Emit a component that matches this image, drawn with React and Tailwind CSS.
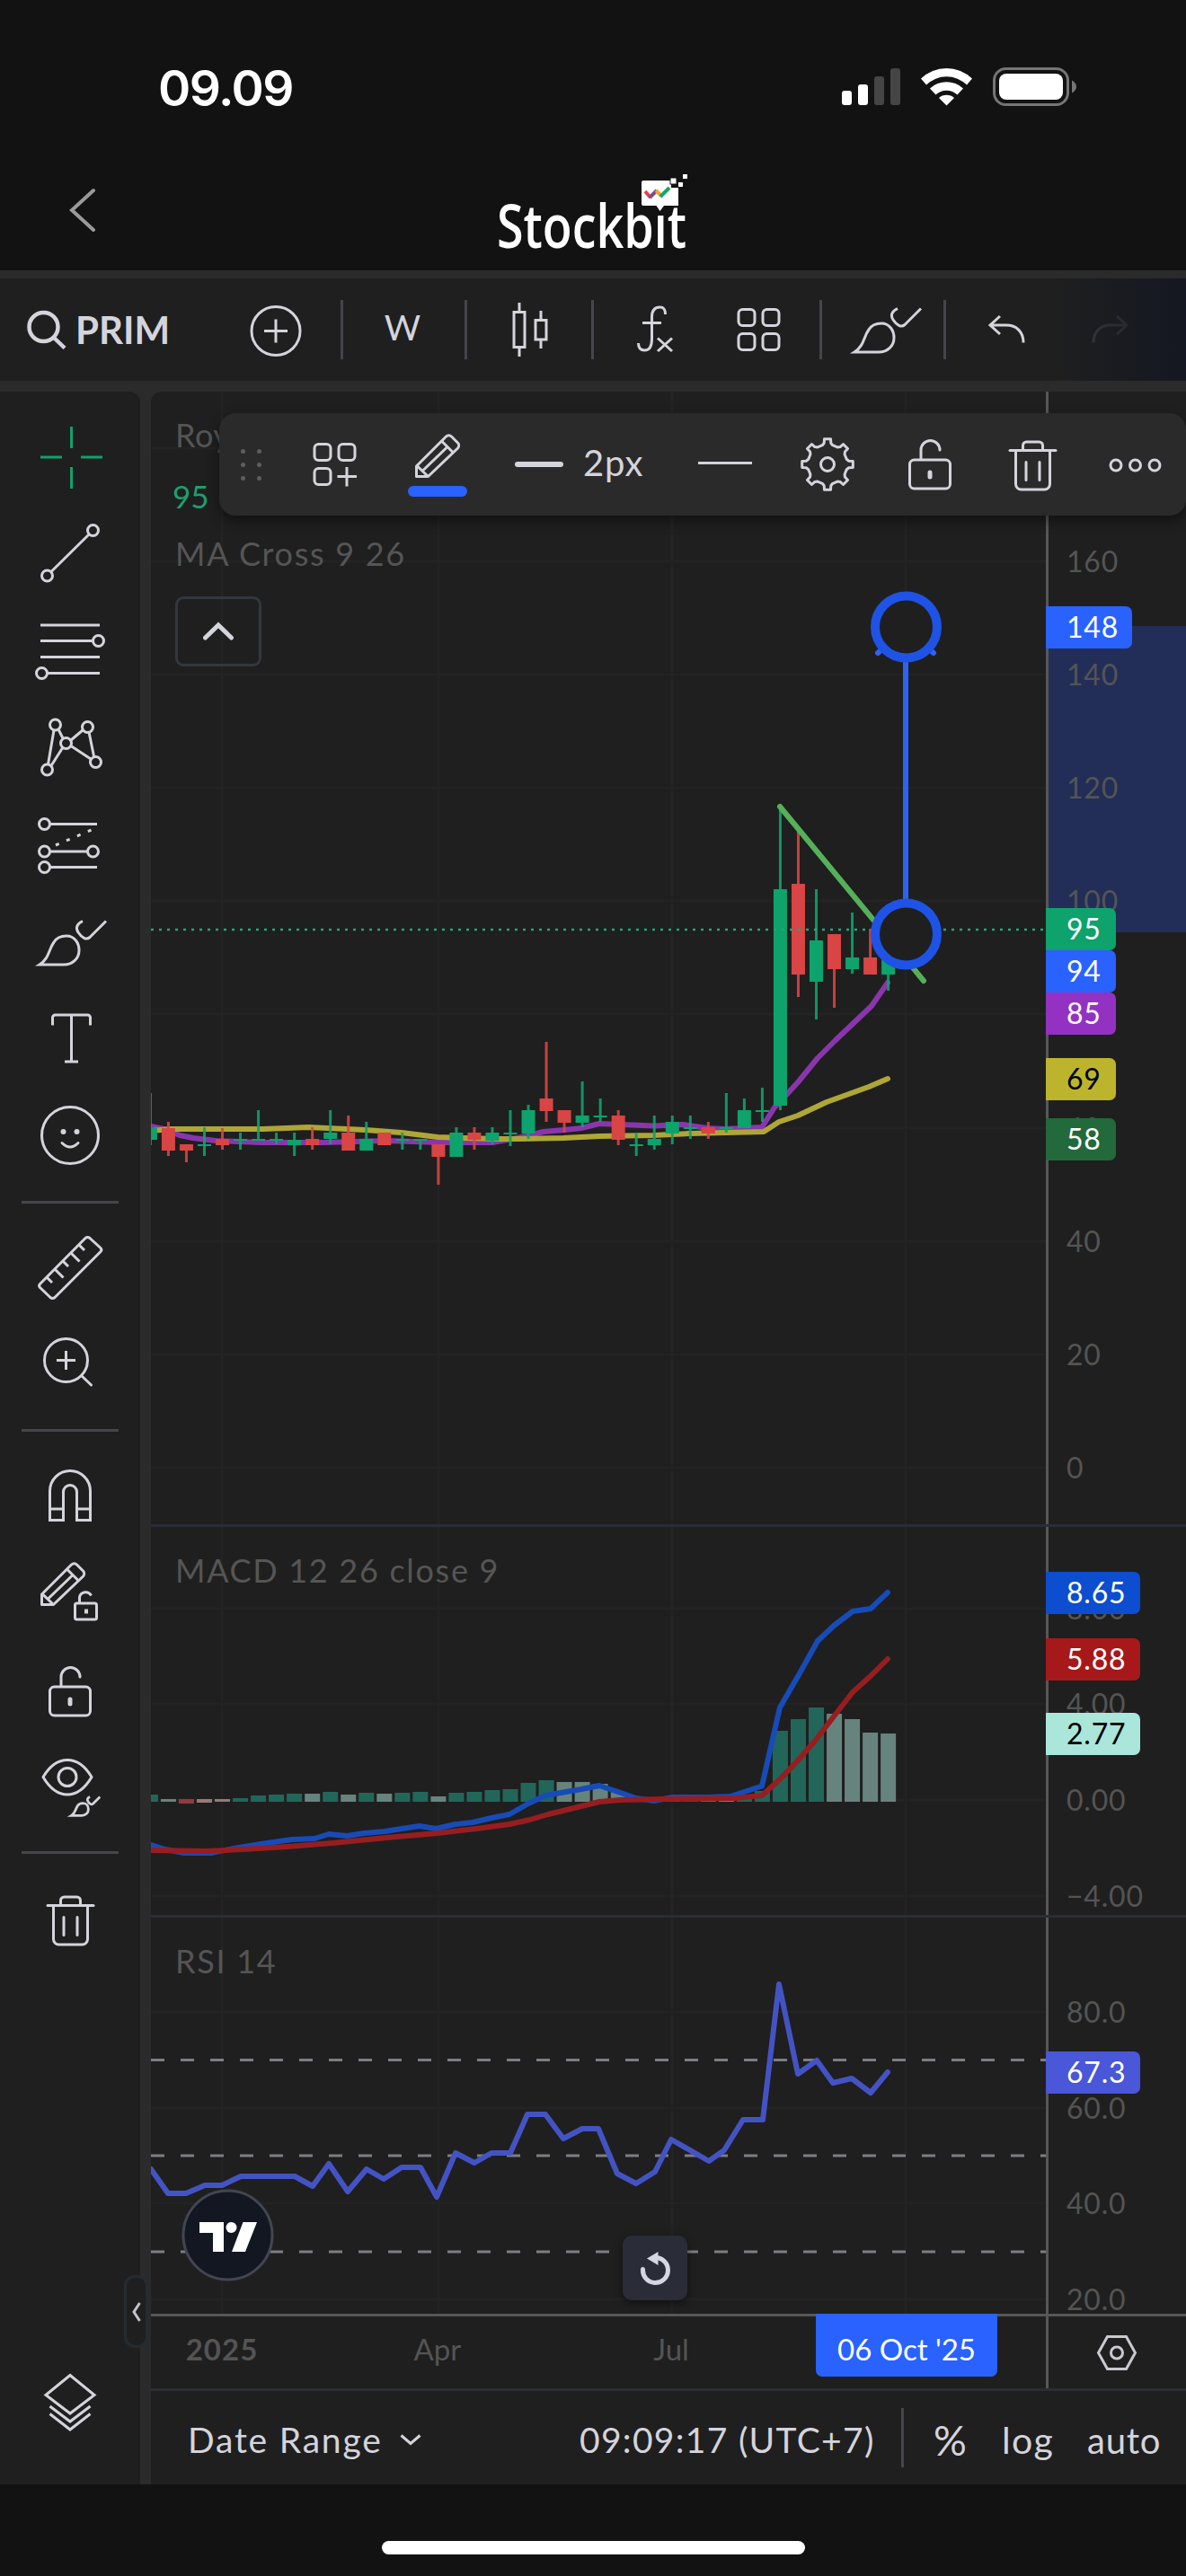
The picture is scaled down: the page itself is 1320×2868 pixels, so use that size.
import React from 'react';

const Icon = ({ children, size = 84, className = 'text-[#d4d4dc]', strokeWidth = 3 }) => (
  <svg
    width={size}
    height={size}
    viewBox={`0 0 ${size} ${size}`}
    fill="none"
    stroke="currentColor"
    strokeWidth={strokeWidth}
    className={`shrink-0 ${className}`}
  >
    {children}
  </svg>
);

/* ---------- icons ---------- */

const BrushShape = () => (
  <>
    <path d="M8 67C19 60 18 50 24 42c3-5 8-7 14-7 9 0 14 8 14 16 0 9-7 16-17 16Z" />
    <path d="M56 18.500c-6 3-8.500 7-5 12.500 4 6 9 9 13 5.500L82 18.500" />
  </>
);

const PencilShape = () => (
  <>
    <path strokeLinejoin="round" d="M10.500 55.500V44L43.500 11a4.500 4.500 0 0 1 6 0l7 7a4.500 4.500 0 0 1 0 6L23.500 55.500Z" />
    <path d="M11 43.500l12.500 12M38.500 16l13 13M17 49.500L45 22.500" />
  </>
);

const LockShape = () => (
  <>
    <rect x="19.500" y="39" width="45" height="32" rx="5" />
    <path strokeLinecap="round" d="M32 38V28a10.500 10.500 0 0 1 21 0" />
    <rect x="39.500" y="50.500" width="5" height="10" rx="2.500" fill="currentColor" stroke="none" />
  </>
);

const TrashShape = () => (
  <>
    <path strokeLinecap="round" d="M17 28.500h51" />
    <path d="M31.500 28v-5a4 4 0 0 1 4-4h14a4 4 0 0 1 4 4v5" />
    <path d="M23.500 29v37a6 6 0 0 0 6 6h26a6 6 0 0 0 6-6V29" />
    <path strokeLinecap="round" d="M35 41.500v20M50 41.500v20" />
  </>
);

const CrossIcon = () => (
  <Icon className="text-[#0ea26c]">
    <path d="M9 42h24M54 42h24M43.500 8v24M43.500 53v24" />
  </Icon>
);

const TrendLineIcon = () => (
  <Icon>
    <circle cx="16.500" cy="66" r="6" />
    <circle cx="67.500" cy="15.500" r="6" />
    <path d="M21 61.500L63 20" />
  </Icon>
);

const FibIcon = () => (
  <Icon>
    <path d="M9 13h66M9 30.500h58M9 48.500h66M17 66.500h58" />
    <circle cx="73.500" cy="30.500" r="6" />
    <circle cx="10.500" cy="66.500" r="6" />
  </Icon>
);

const PatternIcon = () => (
  <Icon>
    <path d="M17.500 60L24 22M29 21l5 10M21 61.500L34 41M43 33l13-11M63 24l5.500 27M43 39.500L65 54" />
    <circle cx="25.500" cy="16" r="6" />
    <circle cx="61.500" cy="18.500" r="6" />
    <circle cx="37.500" cy="36.500" r="6" />
    <circle cx="16.500" cy="66" r="6" />
    <circle cx="70.500" cy="57.500" r="6" />
  </Icon>
);

const PositionIcon = () => (
  <Icon>
    <path d="M20 18.500h52M20 49h42M20 66.500h52" />
    <path d="M26 42L68 24" strokeDasharray="4 9" />
    <circle cx="13.500" cy="18.500" r="6" />
    <circle cx="13.500" cy="49" r="6" />
    <circle cx="13.500" cy="66.500" r="6" />
    <circle cx="67.500" cy="49" r="6" />
  </Icon>
);

const BrushIcon = () => (
  <Icon>
    <BrushShape />
  </Icon>
);

const TextIcon = () => (
  <Icon>
    <path d="M22.500 26.500V18a3 3 0 0 1 3-3h36a3 3 0 0 1 3 3v8.500M43.500 15v52M36 67h15" />
  </Icon>
);

const SmileIcon = () => (
  <Icon>
    <circle cx="42" cy="41" r="31.500" />
    <circle cx="34.500" cy="37" r="3" fill="currentColor" stroke="none" />
    <circle cx="49.500" cy="37" r="3" fill="currentColor" stroke="none" />
    <path strokeLinecap="round" d="M33 49.500q9 9 18 0" />
  </Icon>
);

const RulerIcon = () => (
  <Icon>
    <path
      strokeLinejoin="round"
      d="M8.500 60.500L59 9.500a4 4 0 0 1 5 0L76 20.500a3 3 0 0 1 0 4L25 75.500a4 4 0 0 1-5 0L8.500 64.500a3 3 0 0 1 0-4Z"
    />
    <path d="M16 53l6 6M25 44l9.500 9.500M34 35l6 6M43 26l9.500 9.500M52 17l6 6" />
  </Icon>
);

const ZoomIcon = () => (
  <Icon>
    <circle cx="37.500" cy="37.500" r="24" />
    <path strokeLinecap="round" d="M54.500 54.500L65.500 65" />
    <path d="M27 37.500h21M37.500 27v21" />
  </Icon>
);

const MagnetIcon = () => (
  <Icon>
    <path d="M19.500 69.500V37a22.500 22.500 0 0 1 45 0v32.500h-15V38a7.500 7.500 0 0 0-15 0v31.500ZM19.500 57h15M49.500 57h15" />
  </Icon>
);

const PencilLockIcon = () => (
  <Icon>
    <PencilShape />
    <rect x="47.500" y="54" width="24" height="18" rx="2" />
    <path d="M52.500 54v-7a7 7 0 0 1 13-1.500" />
    <rect x="58" y="60.500" width="4" height="5" fill="currentColor" stroke="none" />
  </Icon>
);

const LockIcon = () => (
  <Icon>
    <LockShape />
  </Icon>
);

const EyeBrushIcon = () => (
  <Icon>
    <path strokeLinejoin="round" d="M12 31.500C20 18 29 12.500 39 12.500s19 5.500 27 19C58 45 49 51 39 51s-19-6-27-19.500Z" />
    <circle cx="39" cy="31.500" r="10" />
    <g transform="translate(40 45.500) scale(0.43)" strokeWidth="6.500">
      <BrushShape />
    </g>
  </Icon>
);

const TrashIcon = () => (
  <Icon>
    <TrashShape />
  </Icon>
);

const LayersIcon = () => (
  <Icon>
    <path d="M42 14.500l27 22-27 20.500-27-20.500Z" />
    <path d="M19.500 49l22.500 17 22.500-17M19.500 57.500L42 75l22.500-17.500" />
  </Icon>
);

const AddIcon = () => (
  <Icon>
    <circle cx="42" cy="43.500" r="27" />
    <path d="M29 43.500h26M42 30.500v26" />
  </Icon>
);

const CandlesIcon = () => (
  <Icon>
    <rect x="25" y="22.500" width="12" height="39" />
    <path d="M31 12v10M31 62v10M55 21v10M55 53v10" />
    <rect x="49" y="31.500" width="12" height="21.500" />
  </Icon>
);

const FxIcon = () => (
  <Icon>
    <path d="M50.500 25c0-6-2-8-6-8-6 0-9 4-9 11v24c0 9-3 13-8 13-4 0-7-2-7-8M25 34.500h21M42 51.500L58 66M58 51.500L42 66" />
  </Icon>
);

const GridIcon = () => (
  <Icon>
    {[[23, 19.5], [50, 19.5], [23, 46.5], [50, 46.5]].map(([x, y]) => (
      <rect key={`${x}-${y}`} x={x} y={y} width="18" height="18" rx="4.500" />
    ))}
  </Icon>
);

const GridAddIcon = () => (
  <Icon>
    <rect x="19" y="19.500" width="18" height="18" rx="4.500" />
    <rect x="46" y="19.500" width="18" height="18" rx="4.500" />
    <rect x="19" y="46.500" width="18" height="18" rx="4.500" />
    <path d="M44.500 55.500H66M55 45v21.500" />
  </Icon>
);

const UndoIcon = () => (
  <Icon>
    <path d="M33 27L22 37l11 10M22.500 37H40c11 0 19 7 19 19.500" />
  </Icon>
);

const RedoIcon = () => (
  <Icon className="text-[#3c3d43]">
    <path d="M51 27l11 10-11 10M61.500 37H44c-11 0-19 7-19 19.500" />
  </Icon>
);

const gearPath = () => {
  const pts = [];
  for (let i = 0; i < 8; i += 1) {
    const base = i * 45;
    [[-15, 22], [-9, 24], [-7, 28.5], [7, 28.5], [9, 24], [15, 22]].forEach(([da, r]) => {
      const a = ((base + da) * Math.PI) / 180;
      pts.push(`${(42 + r * Math.sin(a)).toFixed(1)} ${(42 - r * Math.cos(a)).toFixed(1)}`);
    });
  }
  return `M${pts.join('L')}Z`;
};

const GearIcon = () => (
  <Icon>
    <path strokeLinejoin="round" d={gearPath()} />
    <circle cx="42" cy="42" r="7.500" />
  </Icon>
);

const MoreIcon = () => (
  <Icon>
    <circle cx="21" cy="43" r="6" />
    <circle cx="42.500" cy="43" r="6" />
    <circle cx="64" cy="43" r="6" />
  </Icon>
);

/* ---------- header ---------- */

const StatusBar = () => (
  <div className="flex h-[150px] items-start justify-between pl-[176px] pr-[120px]">
    <span className="mt-[63px] font-['Inter'] text-[55px] leading-[70px] font-semibold tracking-[-1.5px] text-white">
      09.09
    </span>
    <svg width="264" height="46" viewBox="0 0 264 46" className="mt-[74px]">
      <rect x="1" y="27" width="11" height="16" rx="3" fill="#fff" />
      <rect x="19" y="20" width="11" height="23" rx="3" fill="#fff" />
      <rect x="37" y="11" width="11" height="32" rx="3" fill="#454545" />
      <rect x="55" y="2" width="11" height="41" rx="3" fill="#454545" />
      <g fill="#fff">
        <path d="M89 13.500a41 41 0 0 1 57 0l-6 7a32 32 0 0 0-45 0Z" />
        <path d="M99 24.500a27 27 0 0 1 37 0l-6.500 7a17.500 17.500 0 0 0-24 0Z" />
        <path d="M109 35a13 13 0 0 1 17 0l-8.500 8.500Z" />
      </g>
      <rect x="170.500" y="2.500" width="82" height="40" rx="13" fill="none" stroke="#757575" strokeWidth="3" />
      <rect x="176" y="8" width="71" height="29" rx="8" fill="#fff" />
      <path d="M257 15.500c3 1.500 5 4 5 7s-2 5.500-5 7Z" fill="#757575" />
    </svg>
  </div>
);

const Logo = () => (
  <svg width="214" height="106" viewBox="0 0 214 106">
    <text
      x="-2"
      y="82"
      textLength="211"
      lengthAdjust="spacingAndGlyphs"
      fill="#fff"
      className="font-['Open_Sans'] text-[67px] font-semibold"
    >
      Stockbit
    </text>
    {/* the speech bubble stands in for the dot of the i */}
    <rect x="172" y="28" width="16" height="17" fill="#121212" />
    <path d="M161 7h31v8h8v20h-16l-4.500 6-4-6H161a2 2 0 0 1-2-2V9a2 2 0 0 1 2-2Z" fill="#fff" />
    <rect x="191" y="4" width="7" height="7" fill="#fff" stroke="#121212" />
    <rect x="200" y="9" width="5" height="5" fill="#fff" />
    <rect x="205" y="0" width="5" height="5" fill="#fff" />
    <g fill="none" strokeWidth="4">
      <path d="M163 19l6 7" stroke="#e3464b" />
      <path d="M168 26l8-8" stroke="#7d4b96" />
      <path d="M175 18l6 6" stroke="#f0a42c" />
      <path d="M180 25l10-10" stroke="#17a66a" />
    </g>
  </svg>
);

const NavBar = () => (
  <div className="grid h-[151px] grid-cols-[1fr_214px_1fr] items-start">
    <svg width="34" height="54" viewBox="0 0 34 54" className="mt-[57px] ml-[75px]">
      <path d="M29 5L5 27l24 22" fill="none" stroke="#9a9a9a" strokeWidth="4" strokeLinecap="round" />
    </svg>
    <div className="mt-[44px] ml-[2px]">
      <Logo />
    </div>
  </div>
);

const Divider = () => <div className="h-[66px] w-[3px] bg-[#45454e]" />;

const Cell = ({ className, children }) => (
  <div className={`flex h-full shrink-0 items-center justify-center ${className}`}>{children}</div>
);

const TopToolbar = () => (
  <div className="relative flex h-[114px] items-center overflow-hidden bg-[#1f1f1f] text-[#d4d4dc]">
    <div className="flex w-[250px] shrink-0 items-center pl-[26px]">
      <Icon size={52} strokeWidth={4.5}>
        <circle cx="22.500" cy="23" r="16" />
        <path d="M33.500 34.500l12.500 12" />
      </Icon>
      <span className="ml-[6px] text-[42px] leading-none font-bold">PRIM</span>
    </div>
    <Cell className="w-[114px]"><AddIcon /></Cell>
    <Cell className="w-8"><Divider /></Cell>
    <Cell className="w-[104px] text-[39px]"><span className="-mt-1.5">W</span></Cell>
    <Cell className="w-9"><Divider /></Cell>
    <Cell className="w-[105px]"><CandlesIcon /></Cell>
    <Cell className="w-9"><Divider /></Cell>
    <Cell className="w-[109px]"><FxIcon /></Cell>
    <Cell className="w-[109px]"><GridIcon /></Cell>
    <Cell className="w-9"><Divider /></Cell>
    <Cell className="w-[104px] pl-1"><BrushIcon /></Cell>
    <Cell className="w-8"><Divider /></Cell>
    <Cell className="w-[110px]"><UndoIcon /></Cell>
    <Cell className="w-[114px]"><RedoIcon /></Cell>
    <div className="absolute inset-y-0 right-0 w-[150px] bg-linear-to-r from-[#131722]/0 to-[#131722]/90" />
  </div>
);

/* ---------- drawing sidebar ---------- */

const SIDEBAR_GROUPS = [
  [CrossIcon, TrendLineIcon, FibIcon, PatternIcon, PositionIcon, BrushIcon, TextIcon, SmileIcon],
  [RulerIcon, ZoomIcon],
  [MagnetIcon, PencilLockIcon, LockIcon, EyeBrushIcon],
  [TrashIcon],
];

const Sidebar = () => (
  <aside className="relative flex w-[156px] shrink-0 flex-col items-center rounded-tr-xl bg-[#1f1f1f] pt-[19px]">
    {SIDEBAR_GROUPS.map((group, index) => (
      <React.Fragment key={index}>
        {index > 0 && <div className="mt-[18px] mb-[17px] h-[3px] w-[108px] bg-[#45454e]" />}
        {group.map((GroupIcon, i) => (
          <div key={i} className="flex h-[108px] items-center">
            <GroupIcon />
          </div>
        ))}
      </React.Fragment>
    ))}
    <div className="mt-auto mb-[52px]">
      <LayersIcon />
    </div>
    <div className="absolute top-[2097px] left-[138px] z-10 flex h-[81px] w-[27px] items-center justify-center rounded-xl border-3 border-[#262b30] bg-[#1f1f1f]">
      <svg width="12" height="24" viewBox="0 0 12 24">
        <path d="M9.500 2L3 12l6.500 10" fill="none" stroke="#c4c4ca" strokeWidth="3" />
      </svg>
    </div>
  </aside>
);

/* ---------- chart data, in chart canvas pixels ---------- */

const barX = (i) => 167.4 + i * 20.03;

// [high, body top, body bottom, low, rising]
const CANDLES = [
  [1217, 1256, 1269, 1275, 1], [1249, 1256, 1281, 1287, 0], [1274, 1274, 1281, 1294, 0], [1255, 1274, 1276, 1287, 1],
  [1256, 1268, 1275, 1280, 0], [1261, 1268, 1270, 1280, 1], [1236, 1268, 1270, 1270, 1], [1261, 1268, 1270, 1274, 1],
  [1261, 1269, 1275, 1287, 1], [1255, 1268, 1275, 1280, 0], [1236, 1261, 1268, 1274, 1], [1242, 1261, 1281, 1281, 0],
  [1249, 1268, 1281, 1281, 1], [1261, 1261, 1275, 1275, 0], [1261, 1268, 1270, 1280, 1], [1268, 1268, 1270, 1280, 1],
  [1274, 1274, 1288, 1319, 0], [1255, 1261, 1288, 1288, 1], [1255, 1261, 1269, 1280, 0], [1255, 1261, 1270, 1274, 1],
  [1236, 1261, 1263, 1276, 1], [1230, 1236, 1262, 1268, 1], [1160, 1223, 1237, 1249, 0], [1236, 1236, 1250, 1261, 0],
  [1204, 1242, 1250, 1255, 1], [1223, 1242, 1244, 1249, 1], [1236, 1242, 1269, 1275, 0], [1261, 1274, 1276, 1287, 1],
  [1242, 1268, 1275, 1280, 1], [1242, 1249, 1262, 1274, 1], [1242, 1255, 1257, 1268, 1], [1249, 1255, 1262, 1268, 0],
  [1217, 1255, 1257, 1261, 1], [1223, 1236, 1256, 1256, 1], [1211, 1236, 1238, 1249, 1], [901, 990, 1231, 1236, 1],
  [926, 984, 1085, 1110, 0], [990, 1047, 1093, 1135, 1], [1040, 1040, 1079, 1122, 0], [1016, 1066, 1079, 1084, 1],
  [1034, 1066, 1085, 1085, 0], [1035, 1040, 1085, 1103, 1],
];

const MA_FAST =
  '168,1254 187,1258 200,1264 215,1267 240,1270 290,1272 360,1272 430,1270 490,1272 548,1272 570,1268 585,1265 605,1260 628,1258 647,1256 667,1251 728,1253.5 760,1252 787,1256 807,1257 848,1255 862,1233 877,1217 888,1205 910,1178 930,1158 970,1120 988,1094';
const MA_SLOW =
  '168,1259 190,1257 293,1257 343,1255 407,1258 447,1261 487,1266 553,1268 577,1268 627,1267 667,1265 727,1264 767,1262 850,1260 867,1249 888,1242 920,1227 967,1210 988,1201';

// [top, bottom, kind]
const HISTOGRAM = [
  [1998, 2006, 'up'], [2003, 2006, 'upWeak'], [2003, 2008, 'down'], [2003, 2007, 'downWeak'], [2003, 2006, 'downWeak'],
  [2002, 2006, 'up'], [1999, 2006, 'up'], [1998, 2006, 'up'], [1997, 2006, 'up'], [1997, 2006, 'upWeak'],
  [1995, 2006, 'up'], [1998, 2006, 'upWeak'], [1996, 2006, 'up'], [1997, 2006, 'upWeak'], [1996, 2006, 'up'],
  [1995, 2006, 'up'], [2000, 2006, 'upWeak'], [1996, 2006, 'up'], [1995, 2006, 'up'], [1993, 2006, 'up'],
  [1992, 2006, 'up'], [1985, 2006, 'up'], [1982, 2006, 'up'], [1984, 2006, 'upWeak'], [1984, 2006, 'upWeak'],
  [1986, 2006, 'upWeak'], [1995, 2006, 'upWeak'], [2003, 2006, 'upWeak'], [2003, 2006, 'down'], [2003, 2006, 'downWeak'],
  [2003, 2006, 'up'], [2003, 2006, 'upWeak'], [2003, 2006, 'downWeak'], [2001, 2006, 'up'], [1994, 2006, 'up'],
  [1927, 2006, 'up'], [1914, 2006, 'up'], [1901, 2006, 'up'], [1908, 2006, 'upWeak'], [1914, 2006, 'upWeak'],
  [1929, 2006, 'upWeak'], [1930, 2006, 'upWeak'],
];
const HISTOGRAM_FILL = { up: '#22665a', upWeak: '#67837d', down: '#8f3b3f', downWeak: '#97797a' };

const MACD_LINE =
  '168,2054 184,2059 205,2063 235,2063 260,2058 290,2053 325,2048 350,2047 366,2042 386,2044 405,2041 428,2039 447,2036 467,2033 485,2036 507,2031 526,2029 547,2024 567,2020 588,2008 607,1999 647,1992 667,1988 688,1995 708,2002 728,2005 748,2001 788,2001 813,2000 848,1988.5 868,1901 890,1863 910,1827 928,1810 949,1794 969,1791 988,1773';
const SIGNAL_LINE =
  '168,2060 230,2061 270,2059 320,2056 370,2052 430,2046 487,2041 530,2036 567,2031 590,2026 610,2020 647,2011 667,2006 690,2004 740,2003 818,2002 848,1999 868,1981 888,1960 908,1937 928,1911 949,1884 969,1866 988,1847';
const RSI_LINE =
  '168,2415 187,2442 207,2442 228,2433 247,2433 268,2423 328,2423 348,2434 366,2409 387,2440 408,2415 427,2426 447,2413 468,2413 486,2446 507,2397 528,2408 547,2397 568,2397 587,2354 607,2354 627,2381 648,2370 666,2370 687,2420 708,2431 729,2418 747,2382 789,2406 806,2394 827,2360 849,2360 867,2209 888,2309 909,2294 927,2319 948,2314 969,2330 988,2307';

const GRID_X = [247, 488, 748, 1008];

const Pane = ({ top, height, gridY, children }) => (
  <svg width="1152" height={height} viewBox={`168 ${top} 1152 ${height}`} className="block">
    <g stroke="#232323" strokeWidth="3">
      {gridY.map((y) => (
        <path key={y} d={`M168 ${y}H1164`} />
      ))}
      {GRID_X.map((x) => (
        <path key={x} d={`M${x} ${top}v${height}`} />
      ))}
    </g>
    {children}
  </svg>
);

const Series = ({ points, color, width = 6 }) => (
  <polyline
    points={points}
    fill="none"
    stroke={color}
    strokeWidth={width}
    strokeLinejoin="round"
    strokeLinecap="round"
  />
);

const ScaleLine = ({ top, height }) => <rect x="1164" y={top} width="3" height={height} fill="#575757" />;

const ScaleLabel = ({ y, x = 1187, children }) => (
  <text x={x} y={y + 11.5} fill="#545454" className="text-[32px] tracking-[0.8px]">
    {children}
  </text>
);

const PriceTag = ({ y, width, bg, color = '#fff', children }) => (
  <g>
    <path d={`M1164 ${y}h${width - 7}a7 7 0 0 1 7 7v33a7 7 0 0 1-7 7h-${width - 7}Z`} fill={bg} />
    <text x="1187" y={y + 35} fill={color} className="text-[32px] tracking-[0.8px]">
      {children}
    </text>
  </g>
);

const PricePane = () => (
  <Pane top={436} height={1261} gridY={[499, 625, 751, 877, 1003, 1129, 1256, 1382, 1508, 1634]}>
    <rect x="1167" y="697" width="153" height="341" fill="#222e58" />
    <Series points={MA_FAST} color="#8936ad" />
    <Series points={MA_SLOW} color="#afa638" />
    {CANDLES.map(([high, top, bottom, low, rising], i) => (
      <g key={i} fill={rising ? '#0ea26c' : '#d94444'}>
        <rect x={barX(i) - 1.5} y={high} width="3" height={low - high} opacity="0.9" />
        <rect x={barX(i) - 7.5} y={top} width="15" height={bottom - top} />
      </g>
    ))}
    <path d="M168 1035H1164" stroke="#27a27a" strokeWidth="2.500" strokeDasharray="3 6" />
    <path d="M868 898L1028 1092" stroke="#56b05a" strokeWidth="6" strokeLinecap="round" />

    {/* arrow being placed, with its two drag handles */}
    <g fill="none" stroke="#2f62f3" strokeWidth="6" strokeLinecap="round">
      <path d="M1008 1040V698M977 727l31-29 31 29" />
    </g>
    <circle cx="1008.500" cy="698" r="34.500" fill="#1f1f1f" stroke="#1e53e5" strokeWidth="10" />
    <circle cx="1008.500" cy="1040" r="34.500" fill="#1f1f1f" stroke="#1e53e5" strokeWidth="10" />

    <ScaleLine top={436} height={1261} />
    <ScaleLabel y={625}>160</ScaleLabel>
    <ScaleLabel y={751}>140</ScaleLabel>
    <ScaleLabel y={877}>120</ScaleLabel>
    <ScaleLabel y={1003}>100</ScaleLabel>
    <ScaleLabel y={1256}>60</ScaleLabel>
    <ScaleLabel y={1382}>40</ScaleLabel>
    <ScaleLabel y={1508}>20</ScaleLabel>
    <ScaleLabel y={1634}>0</ScaleLabel>
    <PriceTag y={675} width={96} bg="#2962ff">148</PriceTag>
    <PriceTag y={1011} width={78} bg="#0ea26c">95</PriceTag>
    <PriceTag y={1058} width={78} bg="#2962ff">94</PriceTag>
    <PriceTag y={1105} width={78} bg="#9332c2">85</PriceTag>
    <PriceTag y={1178} width={78} bg="#bdb42e" color="#000">69</PriceTag>
    <PriceTag y={1245} width={78} bg="#22693b">58</PriceTag>
  </Pane>
);

const MacdPane = () => (
  <Pane top={1700} height={432} gridY={[1791, 1897, 2004, 2111]}>
    {HISTOGRAM.map(([top, bottom, kind], i) => (
      <rect key={i} x={barX(i) - 8.5} y={top} width="17" height={bottom - top} fill={HISTOGRAM_FILL[kind]} />
    ))}
    <Series points={MACD_LINE} color="#174bb8" />
    <Series points={SIGNAL_LINE} color="#961e20" />
    <ScaleLine top={1700} height={432} />
    <ScaleLabel y={1791}>8.00</ScaleLabel>
    <ScaleLabel y={1897}>4.00</ScaleLabel>
    <ScaleLabel y={2004}>0.00</ScaleLabel>
    <ScaleLabel y={2111}>−4.00</ScaleLabel>
    <PriceTag y={1750} width={105} bg="#0d4dcf">8.65</PriceTag>
    <PriceTag y={1824} width={105} bg="#a6181a">5.88</PriceTag>
    <PriceTag y={1907} width={105} bg="#aae6da" color="#000">2.77</PriceTag>
  </Pane>
);

const RsiPane = () => (
  <Pane top={2135} height={441} gridY={[2240, 2347, 2453, 2560]}>
    {[2293.5, 2400, 2507].map((y) => (
      <path key={y} d={`M168 ${y}H1164`} stroke="#7d7e84" strokeWidth="3" strokeDasharray="15 18" />
    ))}
    <Series points={RSI_LINE} color="#4453c4" />
    <ScaleLine top={2135} height={441} />
    <ScaleLabel y={2240}>80.0</ScaleLabel>
    <ScaleLabel y={2347}>60.0</ScaleLabel>
    <ScaleLabel y={2453.5}>40.0</ScaleLabel>
    <ScaleLabel y={2560}>20.0</ScaleLabel>
    <PriceTag y={2284} width={105} bg="#4957d8">67.3</PriceTag>

    {/* TradingView badge */}
    <circle cx="253.500" cy="2488.500" r="49.500" fill="#131722" stroke="#434651" strokeWidth="3" />
    <g fill="#fff">
      <path d="M222 2474h27v33h-12v-21h-15ZM270.500 2474H286l-13 33h-15Z" />
      <circle cx="257.500" cy="2480" r="6" />
    </g>
  </Pane>
);

const TimeAxis = () => (
  <div className="relative h-[83px] border-t-3 border-[#575757]">
    <svg width="1152" height="80" viewBox="168 2579 1152 80" className="block">
      <rect x="1164" y="2579" width="3" height="80" fill="#575757" />
      <g fill="#545454" textAnchor="middle">
        <text x="247" y="2628" className="text-[33px] font-bold tracking-[1px]">2025</text>
        <text x="487" y="2628" className="text-[33px]">Apr</text>
        <text x="747" y="2628" className="text-[33px]">Jul</text>
      </g>
      <g fill="none" stroke="#c9c9d0" strokeWidth="3">
        <path d="M1232.500 2601.500h21l10 18-10 18h-21l-10-18Z" />
        <circle cx="1243" cy="2619.500" r="6.500" />
      </g>
    </svg>
    <div className="absolute -top-[3px] left-[740px] flex h-[70px] w-[202px] items-center justify-center rounded-b-[7px] bg-[#2962ff] pt-[10px] text-[33px] text-white">
      06 Oct '25
    </div>
  </div>
);

const ChartFooter = () => (
  <div className="flex h-[107px] items-center border-t-3 border-[#2b2e33] text-[39px] text-[#d4d4dc]">
    <span className="mt-[5px] ml-[41px] w-[218px] tracking-[1.8px] whitespace-nowrap">Date Range</span>
    <svg width="28" height="18" viewBox="0 0 28 18" className="mt-1 ml-[16px]">
      <path d="M3.500 4.500L14 13.500l10.500-9" fill="none" stroke="currentColor" strokeWidth="3" />
    </svg>
    <span className="mt-[5px] ml-[174px] w-[330px] tracking-[1.3px] whitespace-nowrap">09:09:17 (UTC+7)</span>
    <div className="ml-[28px] h-[66px] w-[3px] bg-[#45454e]" />
    <span className="mt-[5px] ml-[33px] w-[42px] text-[46px]">%</span>
    <span className="mt-[5px] ml-[34px] w-[62px] text-[41px] tracking-[1.3px]">log</span>
    <span className="mt-[5px] ml-[33px] text-[40px] tracking-[0.8px]">auto</span>
  </div>
);

/* ---------- floating toolbar of the selected drawing ---------- */

const FloatingToolbar = () => (
  <div className="absolute top-6 left-[76px] flex h-[114px] w-[1076px] items-center rounded-[18px] bg-[#2a2a2a] text-[#d4d4dc] shadow-[0_6px_14px_rgba(0,0,0,0.45)]">
    <Cell className="w-[71px]">
      <div className="grid grid-cols-2 gap-x-[13px] gap-y-[10px]">
        {[0, 1, 2, 3, 4, 5].map((i) => (
          <div key={i} className="size-[5px] rounded-full bg-[#5d5d63]" />
        ))}
      </div>
    </Cell>
    <Cell className="w-[115px]"><GridAddIcon /></Cell>
    <Cell className="w-[114px] flex-col">
      <svg width="54" height="50" viewBox="7 8 54 50" fill="none" stroke="currentColor" strokeWidth="3" className="mt-[1px]">
        <PencilShape />
      </svg>
      <div className="mt-[8px] h-3 w-[66px] rounded-full bg-[#2962ff]" />
    </Cell>
    <div className="flex h-full w-[206px] items-center pl-[29px]">
      <div className="h-[6px] w-[54px] rounded-full bg-current" />
      <span className="-mt-[5px] ml-[22px] text-[40px] tracking-[0.8px]">2px</span>
    </div>
    <Cell className="w-[114px] pb-[3px]"><div className="h-[3px] w-[60px] bg-current" /></Cell>
    <Cell className="w-[114px]"><GearIcon /></Cell>
    <Cell className="w-[114px] pb-1"><LockIcon /></Cell>
    <Cell className="w-[114px] pb-1"><TrashIcon /></Cell>
    <Cell className="w-[114px]"><MoreIcon /></Cell>
  </div>
);

const Legend = () => (
  <div className="absolute top-[15px] left-[27px] flex flex-col items-start text-[36px] leading-[66px] text-[#555555]">
    <span className="tracking-[0.5px]">Roy</span>
    <span className="-ml-[3px] pt-[2px] pb-[-2px] text-[35px] leading-[66px] text-[#1d9f70]">95</span>
    <span className="-mt-[2px] tracking-[1.7px]">MA Cross 9 26</span>
    <button className="mt-[15px] flex h-[78px] w-24 items-center justify-center rounded-[9px] border-3 border-[#33373d]">
      <svg width="40" height="26" viewBox="0 0 40 26">
        <path d="M5.500 20L20 6l14.500 14" fill="none" stroke="#d4d4dc" strokeWidth="5" strokeLinecap="round" />
      </svg>
    </button>
  </div>
);

const PaneTitle = ({ children }) => (
  <div className="absolute top-[23px] left-[27px] text-[36px] leading-[50px] tracking-[1.7px] text-[#555555]">
    {children}
  </div>
);

const ResetButton = () => (
  <button className="absolute top-[354px] left-[525px] flex size-[72px] items-center justify-center rounded-[10px] bg-[#2a2d38] shadow-[0_3px_8px_rgba(0,0,0,0.5)]">
    <svg width="44" height="44" viewBox="0 0 44 44">
      <path d="M8.500 23.500a14 14 0 1 0 14-13" fill="none" stroke="#d4d7e0" strokeWidth="5" strokeLinecap="round" />
      <path d="M13 11.500L25.500 4v15Z" fill="#d4d7e0" />
    </svg>
  </button>
);

const Chart = () => (
  <main className="flex w-[1152px] flex-col rounded-tl-xl bg-[#1f1f1f]">
    <section className="relative">
      <PricePane />
      <Legend />
      <FloatingToolbar />
    </section>
    <div className="h-[3px] bg-[#2a2d38]" />
    <section className="relative">
      <MacdPane />
      <PaneTitle>MACD 12 26 close 9</PaneTitle>
    </section>
    <div className="h-[3px] bg-[#2a2d38]" />
    <section className="relative">
      <RsiPane />
      <PaneTitle>RSI 14</PaneTitle>
      <ResetButton />
    </section>
    <TimeAxis />
    <ChartFooter />
  </main>
);

export default function App() {
  return (
    <div className="h-[2868px] w-[1320px] overflow-hidden bg-[#121212] font-['Lato','Open_Sans',sans-serif]">
      <header>
        <StatusBar />
        <NavBar />
      </header>
      <div className="flex flex-col bg-[#2b2b2b]">
        <div className="h-[9px]" />
        <TopToolbar />
        <div className="h-3" />
        <div className="flex h-[2330px] gap-3">
          <Sidebar />
          <Chart />
        </div>
      </div>
      <div className="flex justify-center pt-[63px]">
        <div className="h-[15px] w-[471px] rounded-full bg-white" />
      </div>
    </div>
  );
}
